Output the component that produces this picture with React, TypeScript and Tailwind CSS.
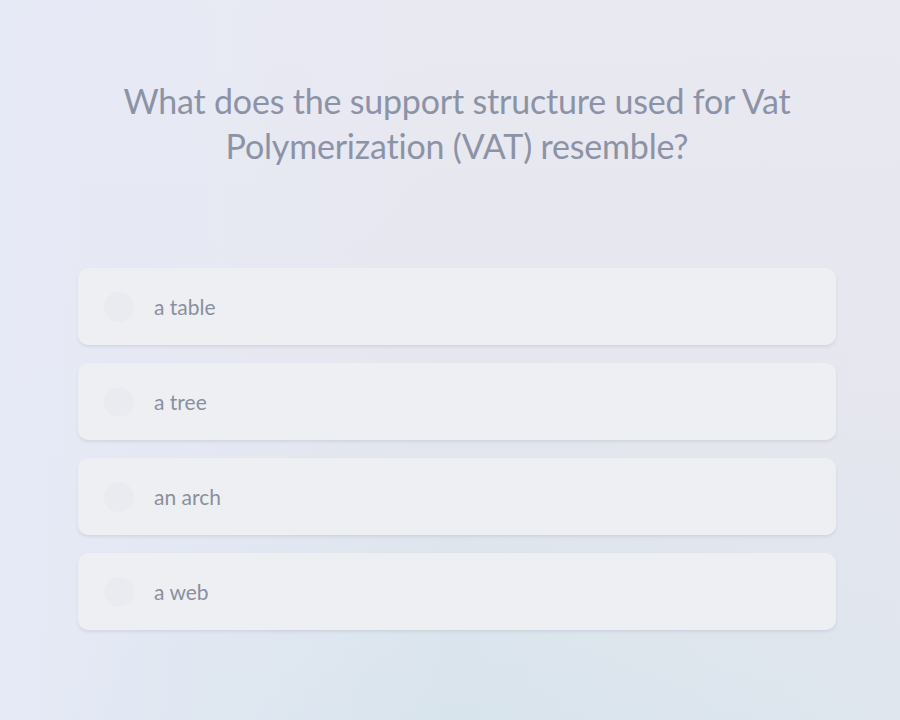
const options = ['a table', 'a tree', 'an arch', 'a web'];

const App = () => {
  return (
    <div
      className="flex h-[720px] w-[900px] flex-col overflow-hidden bg-gradient-to-b from-[#e9e9f1] via-[#e6e6ee] to-[#d8e4ec]"
      style={{ fontFamily: 'Lato, "Open Sans", sans-serif' }}
    >
      <div className="flex h-full w-full bg-gradient-to-r from-[#e6eaf6] via-transparent to-[#e8e8f0]/40">
        <div className="flex w-full flex-col pl-[78px] pr-[64px] pt-[78px]">
          <h1 className="text-center text-[34px] leading-[45px] tracking-[-0.2px] text-[#8d93a6] [font-variant-ligatures:none]">
            What does the support structure used for Vat
            <br />
            Polymerization (VAT) resemble?
          </h1>

          <div className="mt-[100px] flex flex-col gap-[18px]">
            {options.map((option) => (
              <div
                key={option}
                className="flex h-[77px] items-center rounded-[10px] bg-[#edeff3] pl-[26px] shadow-[0_2px_3px_rgba(150,155,175,0.22)]"
              >
                <span className="h-[30px] w-[30px] shrink-0 rounded-full bg-[#e9ebf0]" />
                <span className="ml-[20px] text-[21px] text-[#8a8f9e] [font-variant-ligatures:none]">{option}</span>
              </div>
            ))}
          </div>
        </div>
      </div>
    </div>
  );
};

export default App;
